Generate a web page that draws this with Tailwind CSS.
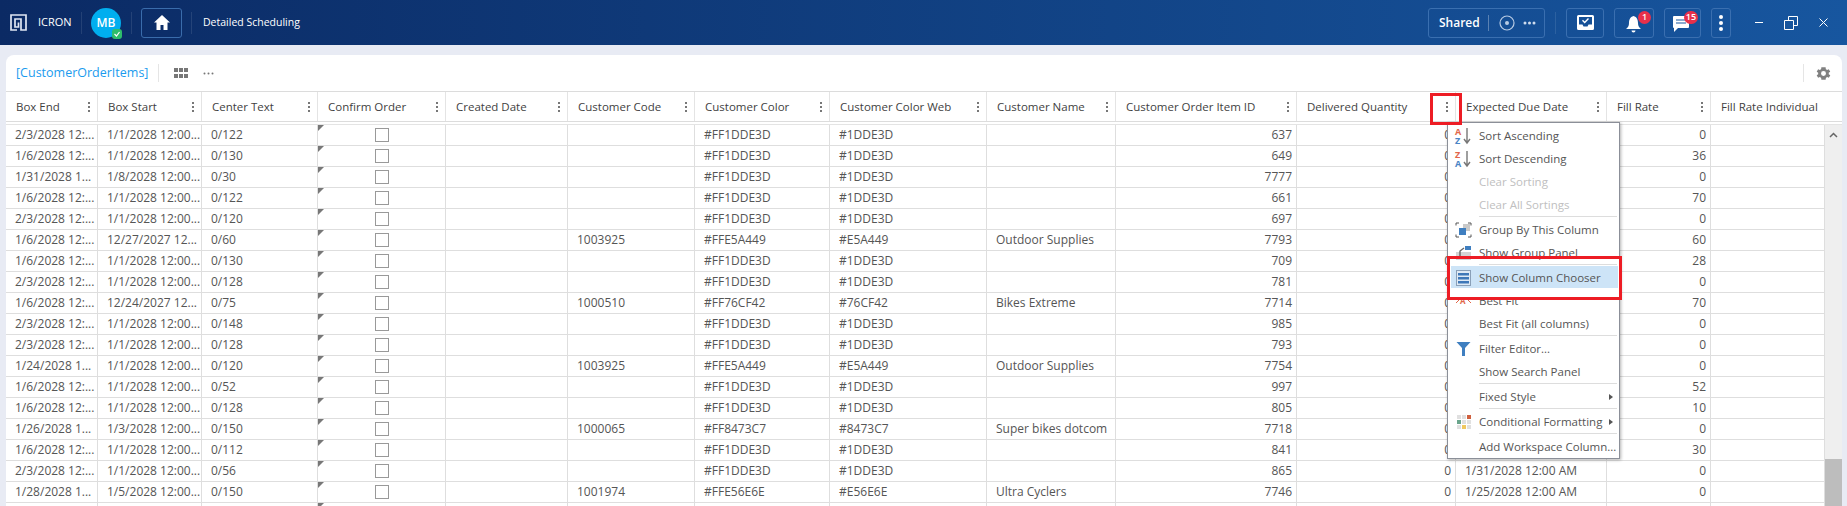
<!DOCTYPE html>
<html lang="en">
<head>
<meta charset="UTF-8">
<title>Detailed Scheduling</title>
<script src="https://cdn.jsdelivr.net/npm/@tailwindcss/browser@4"></script>
</head>
<body class="relative h-screen overflow-hidden flex flex-col bg-[#e8ebf4] font-['Open_Sans',sans-serif] text-[12px] text-[#555]">

<!-- Top bar -->
<header class="h-[45px] shrink-0 flex items-center text-white bg-gradient-to-r from-[#0b2a64] to-[#17569f]">
    <svg class="ml-[10px] w-[17px] h-[17px]" viewBox="0 0 17 17" fill="none" stroke="#dfe6f2" stroke-width="1.7"><path d="M7 16H1V1h15v15h-5V5H5v8h3.500V8.500"/></svg>
    <span class="ml-[11px] w-[43px] text-[11px] font-medium">ICRON</span>
    <div class="w-px h-[22px] bg-white/10"></div>
    <div class="relative ml-[9px] w-[30px] h-[30px] rounded-full bg-[#00aeef] flex items-center justify-center text-[12px] font-semibold">MB
        <span class="absolute right-[-1px] bottom-[-1px] w-[10px] h-[10px] rounded-[3px] bg-[#2ebd6b] flex items-center justify-center"><svg class="w-[8px] h-[8px]" viewBox="0 0 8 8" fill="none" stroke="#fff" stroke-width="1.2"><path d="M1.500 4l2 2 3-4"/></svg></span>
    </div>
    <div class="ml-[10px] w-px h-[22px] bg-white/10"></div>
    <button class="ml-[9px] w-[41px] h-[30px] rounded-[3px] border border-[#3a6cab] flex items-center justify-center"><svg class="w-[16px] h-[15px]" viewBox="0 0 16 15" fill="#fff"><path d="M8 0L0 7.500h2.500V15h4v-5h3v5h4V7.500H16z"/></svg></button>
    <div class="ml-[9px] w-px h-[22px] bg-white/10"></div>
    <span class="ml-[11px] text-[10.5px] font-medium">Detailed Scheduling</span>

    <div class="ml-auto w-[117px] h-[30px] rounded-[3px] border border-[#3a6fb0] flex items-center">
        <span class="ml-[10px] w-[49px] text-[12px] font-semibold">Shared</span>
        <div class="w-px h-[16px] bg-white/30"></div>
        <svg class="ml-[10px] w-[16px] h-[16px]" viewBox="0 0 16 16" fill="none" stroke="#b8cbe4" stroke-width="1.2"><circle cx="8" cy="8" r="7"/><circle cx="8" cy="8" r="2" fill="#b8cbe4" stroke="none"/></svg>
        <svg class="ml-[8px] w-[13px] h-[4px]" viewBox="0 0 13 4" fill="#cfdcee"><circle cx="2" cy="2" r="1.500"/><circle cx="6.500" cy="2" r="1.500"/><circle cx="11" cy="2" r="1.500"/></svg>
    </div>
    <div class="ml-[10px] w-px h-[22px] bg-white/10"></div>
    <button class="ml-[10px] w-[38px] h-[30px] rounded-[3px] border border-[#3a6fb0] flex items-center justify-center"><svg class="w-[17px] h-[15px]" viewBox="0 0 17 15"><path fill="#fff" fill-rule="evenodd" d="M1.500 0h14A1.500 1.500 0 0 1 17 1.500v12a1.500 1.500 0 0 1-1.500 1.500h-14A1.500 1.500 0 0 1 0 13.500v-12A1.500 1.500 0 0 1 1.500 0zM2 2v7.500h3.500l1 2h4l1-2H15V2z"/><path d="M5.500 5.200l2.200 2.200 3.800-3.900" fill="none" stroke="#fff" stroke-width="1.400"/></svg></button>
    <button class="relative ml-[10px] w-[40px] h-[30px] rounded-[3px] border border-[#3a6fb0] flex items-center justify-center"><svg class="w-[15px] h-[17px] mt-[3px] mr-[2px]" viewBox="0 0 15 17" fill="#fff"><path d="M7.500 0C4 1 3 4 3 7c0 3-1 4-3 6h15c-2-2-3-3-3-6 0-3-1-6-4.500-7zM5.500 14.500h4a2 2 0 0 1-4 0z"/></svg>
        <span class="absolute top-[2px] right-[2px] w-[13px] h-[13px] rounded-full bg-[#e8304a] text-[9px] font-semibold flex items-center justify-center">1</span></button>
    <button class="relative ml-[10px] w-[37px] h-[30px] rounded-[3px] border border-[#3a6fb0] flex items-center justify-center"><svg class="w-[16px] h-[16px] mt-[3px] mr-[4px]" viewBox="0 0 16 16"><path fill="#fff" d="M1 0h14a1 1 0 0 1 1 1v10a1 1 0 0 1-1 1H5l-4 4v-4a1 1 0 0 1-1-1V1a1 1 0 0 1 1-1z"/><path d="M3 4h10M3 7h10" stroke="#17569f" stroke-width="1.200"/></svg>
        <span class="absolute top-[2px] right-[2px] w-[14px] h-[13px] rounded-full bg-[#e8304a] text-[9px] font-semibold flex items-center justify-center">15</span></button>
    <button class="ml-[10px] w-[20px] h-[30px] rounded-[3px] border border-[#3a6fb0] flex flex-col items-center justify-center gap-[2px]">
        <span class="w-[4px] h-[4px] rounded-full bg-white"></span><span class="w-[4px] h-[4px] rounded-full bg-white"></span><span class="w-[4px] h-[4px] rounded-full bg-white"></span>
    </button>
    <div class="ml-[24px] w-[8px] h-px bg-white"></div>
    <svg class="ml-[21px] w-[14px] h-[14px]" viewBox="0 0 14 14" fill="none" stroke="#fff"><path d="M.5 4.500h9v9h-9zM4.500 4.500v-4h9v9h-4"/></svg>
    <svg class="ml-[21px] mr-[19px] w-[9px] h-[9px]" viewBox="0 0 9 9" fill="none" stroke="#fff"><path d="M.5.5l8 8M8.500.5l-8 8"/></svg>
</header>

<!-- Grid panel -->
<main class="flex-1 min-h-0 ml-[6px] mr-[5px] mt-[10px] bg-white rounded-t-lg flex flex-col overflow-hidden">
    <div class="h-[37px] shrink-0 flex items-center border-b border-[#dcdcdc]">
        <span class="ml-[10px] w-[142px] text-[12.5px] text-[#1a9bee] font-medium whitespace-nowrap">[CustomerOrderItems]</span>
        <div class="w-px h-[18px] bg-[#e5e5e5]"></div>
        <svg class="ml-[15px] w-[14px] h-[10px]" viewBox="0 0 14 10" fill="#777"><path d="M0 0h4v4H0zM5 0h4v4H5zM10 0h4v4h-4zM0 6h4v4H0zM5 6h4v4H5zM10 6h4v4h-4z"/></svg>
        <svg class="ml-[15px] w-[11px] h-[3px]" viewBox="0 0 11 3" fill="#777"><circle cx="1.500" cy="1.500" r="1"/><circle cx="5.500" cy="1.500" r="1"/><circle cx="9.500" cy="1.500" r="1"/></svg>
        <div class="ml-auto w-px h-[18px] bg-[#e5e5e5]"></div>
        <svg class="ml-[11px] mr-[10px] w-[17px] h-[17px]" viewBox="0 0 24 24" fill="#808080"><path d="M19.400 13a7.500 7.500 0 0 0 0-2l2.100-1.600-2-3.500-2.500 1a7.500 7.500 0 0 0-1.700-1L15 3.200h-6l-.4 2.700a7.500 7.500 0 0 0-1.700 1l-2.500-1-2 3.500L4.500 11a7.500 7.500 0 0 0 0 2l-2.100 1.600 2 3.500 2.500-1a7.500 7.500 0 0 0 1.700 1l.4 2.700h6l.4-2.700a7.500 7.500 0 0 0 1.700-1l2.500 1 2-3.500zM12 15.500a3.500 3.500 0 1 1 0-7 3.500 3.500 0 0 1 0 7z"/></svg>
    </div>
    <div id="head" class="h-[30px] shrink-0 grid grid-cols-[92px_104px_116px_128px_122px_127px_135px_157px_129px_181px_159px_151px_104px_114px] border-b border-[#dcdcdc] text-[11.5px] font-medium text-[#3f3f3f]"></div>
    <div class="flex-1 min-h-0 flex mt-[2px] border-t border-[#e4e4e4]">
        <div id="rows" class="w-[1819px] overflow-hidden"></div>
        <div class="w-[17px] flex flex-col bg-[#efefef]">
            <svg class="mt-[7px] ml-[4px] w-[9px] h-[6px]" viewBox="0 0 9 6" fill="none" stroke="#666" stroke-width="1.500"><path d="M1 5l3.500-3.500L8 5"/></svg>
            <div class="mt-auto h-[47px] bg-[#bdbdbd]"></div>
        </div>
    </div>
</main>

<!-- Column header context menu -->
<div class="absolute left-[1447px] top-[122px] w-[173px] h-[337px] pt-[1px] bg-white border border-[#8b8f98] shadow-[1px_1px_3px_rgba(0,0,0,0.3)] text-[11.5px] text-[#555] whitespace-nowrap">
    <div class="h-[23px] flex items-center"><svg class="w-[31px] h-[20px]" viewBox="0 0 31 20"><text x="7" y="9" font-size="9" font-weight="700" fill="#e2674a" font-family="Open Sans">A</text><text x="7" y="18" font-size="9" font-weight="700" fill="#4a85c5" font-family="Open Sans">Z</text><path d="M19 2v14M16 13l3 4 3-4" fill="none" stroke="#777" stroke-width="1.400"/></svg>Sort Ascending</div>
    <div class="h-[23px] flex items-center"><svg class="w-[31px] h-[20px]" viewBox="0 0 31 20"><text x="7" y="9" font-size="9" font-weight="700" fill="#e2674a" font-family="Open Sans">Z</text><text x="7" y="18" font-size="9" font-weight="700" fill="#4a85c5" font-family="Open Sans">A</text><path d="M19 2v14M16 13l3 4 3-4" fill="none" stroke="#777" stroke-width="1.400"/></svg>Sort Descending</div>
    <div class="h-[23px] flex items-center pl-[31px] text-[#c0c0c0]">Clear Sorting</div>
    <div class="h-[23px] flex items-center pl-[31px] text-[#c0c0c0]">Clear All Sortings</div>
    <div class="h-[2px] ml-[31px] mr-[2px] border-t border-[#ddd]"></div>
    <div class="h-[23px] flex items-center"><svg class="w-[31px] h-[18px]" viewBox="0 0 31 18"><path d="M8 4.500V2h3M20 2h3v2.500M8 13.500V16h3M20 16h3v-2.500" fill="none" stroke="#555"/><rect x="15" y="3" width="7" height="7" fill="#c9c9c9"/><rect x="11" y="7" width="7" height="7" fill="#3f7fc0"/></svg>Group By This Column</div>
    <div class="h-[23px] flex items-center"><svg class="w-[31px] h-[18px]" viewBox="0 0 31 18"><rect x="8" y="8" width="15" height="8" fill="#d4d4d4"/><rect x="17" y="2" width="6" height="4" fill="#3f7fc0"/><path d="M16 4l-4 3v6" fill="none" stroke="#666" stroke-width="1.400"/></svg>Show Group Panel</div>
    <div class="h-[2px] ml-[31px] mr-[2px] border-t border-[#ddd]"></div>
    <div class="relative h-[23px] flex items-center"><div class="absolute left-[3px] right-[1px] top-0 bottom-[1px] bg-[#cde4f7]"></div><svg class="relative w-[31px] h-[18px]" viewBox="0 0 31 18"><rect x="8.500" y="1.500" width="14" height="15" fill="#dfeaf5" stroke="#8aa0b8"/><path d="M10 4h11v2.500H10zM10 8h11v2.500H10zM10 12h11v2.500H10z" fill="#3f78b8"/></svg><span class="relative">Show Column Chooser</span></div>
    <div class="h-[23px] flex items-center"><svg class="w-[31px] h-[14px]" viewBox="0 0 31 14"><path d="M8 3l3 3-3 3M23 3l-3 3 3 3" fill="none" stroke="#e2674a"/><text x="12" y="10" font-size="8" font-weight="700" fill="#e2674a" font-family="Open Sans">A</text></svg>Best Fit</div>
    <div class="h-[23px] flex items-center pl-[31px]">Best Fit (all columns)</div>
    <div class="h-[2px] ml-[31px] mr-[2px] border-t border-[#ddd]"></div>
    <div class="h-[23px] flex items-center"><svg class="w-[31px] h-[16px]" viewBox="0 0 31 16"><path d="M8.500 1h14l-5.500 6v8h-3V7z" fill="#3f7fc0"/></svg>Filter Editor...</div>
    <div class="h-[23px] flex items-center pl-[31px]">Show Search Panel</div>
    <div class="h-[2px] ml-[31px] mr-[2px] border-t border-[#ddd]"></div>
    <div class="relative h-[23px] flex items-center pl-[31px]">Fixed Style<span class="absolute right-[6px] border-y-[3px] border-l-[4px] border-y-transparent border-l-[#555]"></span></div>
    <div class="h-[2px] ml-[31px] mr-[2px] border-t border-[#ddd]"></div>
    <div class="relative h-[23px] flex items-center"><svg class="w-[31px] h-[15px]" viewBox="0 0 31 15"><path fill="#e0e0e0" d="M9 1h4v4H9zM14 1h4v4h-4zM14 6h4v4h-4zM19 6h4v4h-4zM9 11h4v4H9zM19 11h4v4h-4z"/><path fill="#d0603e" d="M19 1h4v4h-4z"/><path fill="#6aa58c" d="M9 6h4v4H9z"/><path fill="#f0c860" d="M14 11h4v4h-4z"/></svg>Conditional Formatting<span class="absolute right-[6px] border-y-[3px] border-l-[4px] border-y-transparent border-l-[#555]"></span></div>
    <div class="h-[2px] ml-[31px] mr-[2px] border-t border-[#ddd]"></div>
    <div class="h-[23px] flex items-center pl-[31px]">Add Workspace Column...</div>
</div>

<!-- Red annotation boxes -->
<div class="absolute left-[1430px] top-[93px] w-[32px] h-[32px] border-[3px] border-[#ed1c24]"></div>
<div class="absolute left-[1447px] top-[256px] w-[175px] h-[44px] border-[3px] border-[#ed1c24]"></div>

<script>
    const columns = ['Box End', 'Box Start', 'Center Text', 'Confirm Order', 'Created Date', 'Customer Code', 'Customer Color', 'Customer Color Web', 'Customer Name', 'Customer Order Item ID', 'Delivered Quantity', 'Expected Due Date', 'Fill Rate', 'Fill Rate Individual'];

    const green = ['', '#FF1DDE3D', '#1DDE3D', ''];
    const outdoor = ['1003925', '#FFE5A449', '#E5A449', 'Outdoor Supplies'];
    const data = [
        ['2/3/2028 12:...', '1/1/2028 12:00...', '0/122', green, '637', '', '0'],
        ['1/6/2028 12:...', '1/1/2028 12:00...', '0/130', green, '649', '', '36'],
        ['1/31/2028 1...', '1/8/2028 12:00...', '0/30', green, '7777', '', '0'],
        ['1/6/2028 12:...', '1/1/2028 12:00...', '0/122', green, '661', '', '70'],
        ['2/3/2028 12:...', '1/1/2028 12:00...', '0/120', green, '697', '', '0'],
        ['1/6/2028 12:...', '12/27/2027 12...', '0/60', outdoor, '7793', '', '60'],
        ['1/6/2028 12:...', '1/1/2028 12:00...', '0/130', green, '709', '', '28'],
        ['2/3/2028 12:...', '1/1/2028 12:00...', '0/128', green, '781', '', '0'],
        ['1/6/2028 12:...', '12/24/2027 12...', '0/75', ['1000510', '#FF76CF42', '#76CF42', 'Bikes Extreme'], '7714', '', '70'],
        ['2/3/2028 12:...', '1/1/2028 12:00...', '0/148', green, '985', '', '0'],
        ['2/3/2028 12:...', '1/1/2028 12:00...', '0/128', green, '793', '', '0'],
        ['1/24/2028 1...', '1/1/2028 12:00...', '0/120', outdoor, '7754', '', '0'],
        ['1/6/2028 12:...', '1/1/2028 12:00...', '0/52', green, '997', '', '52'],
        ['1/6/2028 12:...', '1/1/2028 12:00...', '0/128', green, '805', '', '10'],
        ['1/26/2028 1...', '1/3/2028 12:00...', '0/150', ['1000065', '#FF8473C7', '#8473C7', 'Super bikes dotcom'], '7718', '', '0'],
        ['1/6/2028 12:...', '1/1/2028 12:00...', '0/112', green, '841', '', '30'],
        ['2/3/2028 12:...', '1/1/2028 12:00...', '0/56', green, '865', '1/31/2028 12:00 AM', '0'],
        ['1/28/2028 1...', '1/5/2028 12:00...', '0/150', ['1001974', '#FFE56E6E', '#E56E6E', 'Ultra Cyclers'], '7746', '1/25/2028 12:00 AM', '0'],
    ];

    const kebab = '<span class="ml-auto mr-[7px] flex flex-col gap-[2px]"><i class="w-[2px] h-[2px] bg-[#777]"></i><i class="w-[2px] h-[2px] bg-[#777]"></i><i class="w-[2px] h-[2px] bg-[#777]"></i></span>';
    document.getElementById('head').innerHTML = columns.map((name, i) =>
        `<div class="flex items-center pl-[10px] whitespace-nowrap ${i < 13 ? 'border-r border-[#e4e4e4]' : ''}">${name}${i < 13 ? kebab : ''}</div>`
    ).join('');

    const left = 'flex items-center pl-[9px] border-r border-b border-[#dedede] whitespace-nowrap';
    const right = 'flex items-center justify-end pr-[4px] border-r border-b border-[#dedede]';
    const checkbox = '<div class="relative flex items-center justify-center border-r border-b border-[#dedede]"><span class="absolute left-0 top-0 border-t-[6px] border-r-[6px] border-t-[#777] border-r-transparent"></span><span class="w-[14px] h-[14px] border border-[#999]"></span></div>';
    const row = (r) => {
        const [code, color, web, name] = r[3];
        return `<div class="h-[21px] grid grid-cols-[92px_104px_116px_128px_122px_127px_135px_157px_129px_181px_159px_151px_104px_114px]">
            <div class="${left}">${r[0]}</div><div class="${left}">${r[1]}</div><div class="${left}">${r[2]}</div>${checkbox}
            <div class="${left}"></div><div class="${left}">${code}</div><div class="${left}">${color}</div><div class="${left}">${web}</div><div class="${left}">${name}</div>
            <div class="${right}">${r[4]}</div><div class="${right}">${r[4] ? '0' : ''}</div><div class="${left}">${r[5]}</div><div class="${right}">${r[6]}</div><div class="${left}"></div>
        </div>`;
    };
    document.getElementById('rows').innerHTML = data.map(row).join('') + row(['', '', '', ['', '', '', ''], '', '', '']);
</script>
</body>
</html>
